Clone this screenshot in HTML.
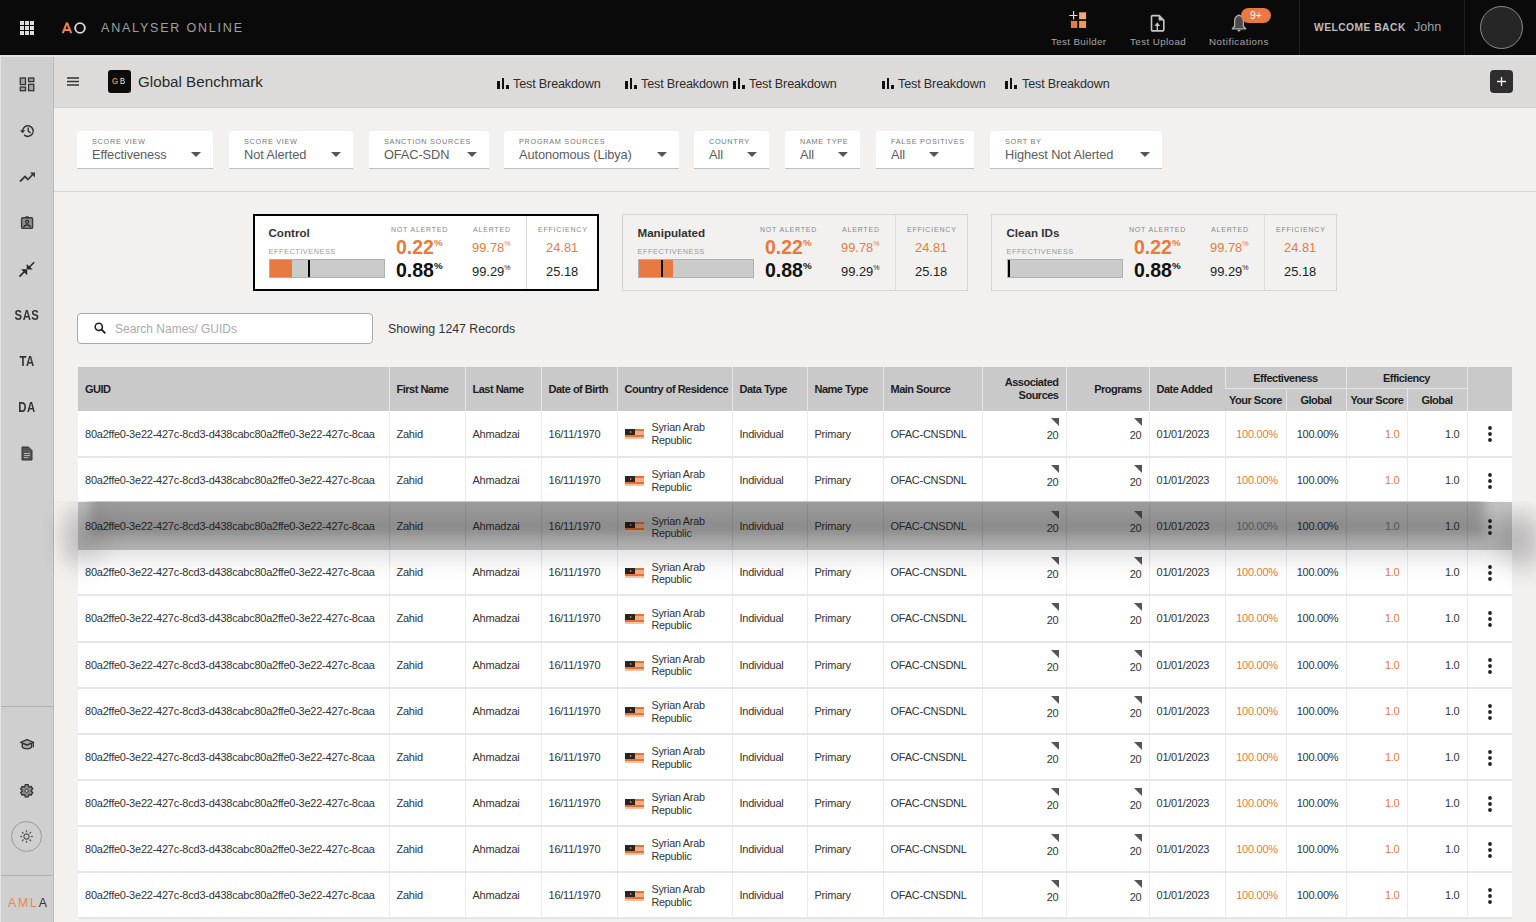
<!DOCTYPE html><html><head><meta charset="utf-8"><style>
*{margin:0;padding:0;box-sizing:border-box}
html,body{width:1536px;height:922px;overflow:hidden;background:#f2f1f0;font-family:"Liberation Sans",sans-serif;color:#333}
.a{position:absolute}
.top{left:0;top:0;width:1536px;height:55px;background:#0a0a0a}
.side{left:0;top:55px;width:54px;height:867px;background:#cfcfcf;border-right:1px solid #bbbbbb}
.hdr{left:54px;top:55px;width:1482px;height:53px;background:#dcdbda;border-bottom:1px solid #d0d0d0}
.fbar{left:54px;top:108px;width:1482px;height:84px;border-bottom:1px solid #d6d6d6}
.fbox{top:130.5px;height:37.5px;background:#fff;box-shadow:0 1px 0 rgba(0,0,0,.2);border-radius:3px 3px 0 0}
.fbox .l{position:absolute;left:15px;top:6px;font-size:7.3px;letter-spacing:.7px;color:#777;white-space:nowrap}
.fbox .v{position:absolute;left:15px;top:16.4px;font-size:12.8px;color:#5c5c5c;letter-spacing:-.1px;white-space:nowrap}
.fbox .ar{position:absolute;top:21px;width:0;height:0;border-left:5px solid transparent;border-right:5px solid transparent;border-top:5px solid #555}
.tab{top:76.5px;font-size:12.6px;color:#2b2b2b;white-space:nowrap;letter-spacing:-.15px}
.bars{top:77px;width:12px;height:12px}
.bars i{position:absolute;bottom:0;width:2.8px;background:#111}
.card{top:214px;height:77px;width:346px}
.card .t{position:absolute;left:13.5px;top:9.5px;font-size:11.6px;font-weight:bold;color:#333}
.card .e{position:absolute;left:13.5px;top:30.5px;font-size:7.4px;letter-spacing:.5px;color:#999}
.card .bar{position:absolute;left:13.5px;top:43.3px;width:116px;height:19px;background:#cbcbcb;border:1px solid #b0b0b0}
.card .fill{position:absolute;left:0;top:0;height:17px;background:#e67a40}
.card .mk{position:absolute;top:0;width:2px;height:17px;background:#000}
.card .h{position:absolute;top:10.3px;font-size:7px;letter-spacing:.8px;color:#888;white-space:nowrap}
.card .big{position:absolute;font-size:19.5px;font-weight:bold;white-space:nowrap}
.card .big sup,.card .med sup{font-size:.5em;vertical-align:top;position:relative;top:1px}
.card .med sup{font-size:.55em;top:0}
.card .med{position:absolute;font-size:12.9px;white-space:nowrap}
.card .div{position:absolute;top:0;width:1px;height:100%;background:#dcdcdc}
.srch{left:77px;top:313px;width:296px;height:31px;background:#fff;border:1px solid #a9a9a9;border-radius:4px}
table{position:absolute;left:78px;top:367px;width:1434px;border-collapse:collapse;table-layout:fixed}
th{background:#c9c9c9;font-size:11px;font-weight:bold;color:#1e1e1e;text-align:left;letter-spacing:-.5px;border-left:1.5px solid #e4e4e4;padding:0 0 0 7px;white-space:nowrap}
th:first-child{border-left:none}
td{background:#fff;height:46.11px;border-left:1px solid #ebebef;border-bottom:2px solid #e6e5ec;font-size:11px;color:#333;padding:0 0 0 7px;white-space:nowrap;letter-spacing:-.24px}
td:first-child{border-left:none}
.o{color:#e67a40}
tr.hov td{background:#c6c6c6;border-left-color:#b4b4b4;border-bottom-color:#c6c6c6}
tr.pre td{border-bottom-color:#c6c6c6}
tr.hov td.o{color:#777}
.shw{left:40px;top:501px;width:1496px;height:92px;overflow:hidden;pointer-events:none}
.shw .b1{position:absolute;left:50px;top:-20px;width:1395px;height:55px;background:rgba(0,0,0,.2);filter:blur(6px)}
.shw .b3{position:absolute;left:1462px;top:14px;width:44px;height:56px;border-radius:22px;background:rgba(0,0,0,.13);filter:blur(12px)}
.shw .b4{position:absolute;left:24px;top:2px;width:40px;height:66px;border-radius:20px;background:rgba(0,0,0,.09);filter:blur(11px)}
.shw .b2{position:absolute;left:24px;top:14px;width:1466px;height:44px;background:rgba(0,0,0,.13);filter:blur(11px)}
.r{text-align:right;padding:0 7px 0 0}
</style></head><body>
<div class="a top"></div>
<svg class="a" style="left:20px;top:21px" width="14" height="14"><rect x="0" y="0" width="4" height="4" fill="#dcdcdc"/><rect x="5" y="0" width="4" height="4" fill="#dcdcdc"/><rect x="10" y="0" width="4" height="4" fill="#dcdcdc"/><rect x="0" y="5" width="4" height="4" fill="#dcdcdc"/><rect x="5" y="5" width="4" height="4" fill="#dcdcdc"/><rect x="10" y="5" width="4" height="4" fill="#dcdcdc"/><rect x="0" y="10" width="4" height="4" fill="#dcdcdc"/><rect x="5" y="10" width="4" height="4" fill="#dcdcdc"/><rect x="10" y="10" width="4" height="4" fill="#dcdcdc"/></svg>
<svg class="a" style="left:60px;top:20px" width="28" height="16"><path d="M2.8 13.2L6.9 2.6M7 2.6L11.2 13.2M4.2 9.9h5.6" stroke="#f08040" stroke-width="2" fill="none"/><circle cx="20" cy="8" r="4.85" fill="none" stroke="#d8d8d8" stroke-width="1.9"/></svg>
<div class="a" style="left:101px;top:21px;font-size:12.5px;letter-spacing:1.8px;color:#a0a0a0;white-space:nowrap">ANALYSER ONLINE</div>
<svg class="a" style="left:1064px;top:8px" width="26" height="24"><path d="M9.6 3.1v8.4M5.3 7.5h8.1" stroke="#e2e2e2" stroke-width="1.15"/><rect x="15.1" y="4.3" width="7" height="6.9" fill="#f3a77a"/><rect x="6.9" y="12.9" width="6.4" height="7.1" fill="#e67a40"/><rect x="15.1" y="12.9" width="7" height="7.1" fill="#ee9562"/></svg>
<div class="a" style="left:1051px;top:36px;font-size:9.8px;letter-spacing:.35px;color:#a6a6a6;white-space:nowrap">Test Builder</div>
<svg class="a" style="left:1150px;top:14px" width="16" height="18"><path d="M2.6 1.6h6.6l4.6 4.7v9.5a1.1 1.1 0 0 1-1.1 1.1h-10.1a1.1 1.1 0 0 1-1.1-1.1v-13.1a1.1 1.1 0 0 1 1.1-1.1z" fill="none" stroke="#c6c6c6" stroke-width="1.6"/><path d="M8.6 1.6v5h5z" fill="#c6c6c6"/><path d="M4.5 12L7.3 8.3 10.1 12z" fill="#c6c6c6"/><path d="M7.3 11v5.5" stroke="#c6c6c6" stroke-width="1.4"/></svg>
<div class="a" style="left:1130px;top:36px;font-size:9.8px;letter-spacing:.4px;color:#a6a6a6;white-space:nowrap">Test Upload</div>
<svg class="a" style="left:1231px;top:14px" width="16" height="18"><path d="M8 1.2c2.8 1 4.4 3.3 4.4 6v5l2.3 2.6h-13.4l2.3-2.6v-5c0-2.7 1.6-5 4.4-6z" fill="#4a4a4a" stroke="#b0b0b0" stroke-width="1.3" stroke-linejoin="round"/><ellipse cx="8" cy="16.6" rx="1.6" ry="1" fill="#b0b0b0"/></svg>
<div class="a" style="left:1241px;top:8px;width:30px;height:15px;background:#e67a40;border-radius:8px;color:#fff;font-size:10.5px;text-align:center;line-height:15px">9+</div>
<div class="a" style="left:1209px;top:36px;font-size:9.8px;letter-spacing:.5px;color:#a6a6a6;white-space:nowrap">Notifications</div>
<div class="a" style="left:1299px;top:0;width:1px;height:55px;background:#1e1e1e"></div>
<div class="a" style="left:1464px;top:0;width:1px;height:55px;background:#1e1e1e"></div>
<div class="a" style="left:1314px;top:22px;font-size:10.3px;font-weight:bold;letter-spacing:.45px;color:#bdbdbd;white-space:nowrap">WELCOME BACK</div>
<div class="a" style="left:1414px;top:20px;font-size:12.6px;color:#a0a0a0;white-space:nowrap">John</div>
<div class="a" style="left:1480px;top:6px;width:43px;height:43px;border:1.2px solid #8a8a8a;border-radius:50%;background:#262626"></div>
<div class="a side"></div>
<div class="a" style="left:0;top:55px;width:1px;height:867px;background:#e4e4e4"></div>
<svg class="a" style="left:19px;top:77px" width="16" height="16"><g fill="#a4a4a4" stroke="#333" stroke-width="1.3"><rect x="1.3" y="1" width="5.2" height="6.6"/><rect x="1.3" y="10.1" width="5.2" height="3.6"/><rect x="9.6" y="1" width="5.2" height="3.6"/><rect x="9.6" y="7.3" width="5.2" height="6.4"/></g></svg>
<svg class="a" style="left:19px;top:123px" width="16" height="16"><path d="M3.6 8a5.3 5.3 0 1 1 1.6 3.9" fill="none" stroke="#333" stroke-width="1.5"/><path d="M1 7.2h5.2l-2.6 3z" fill="#333"/><path d="M9.2 4.6v3.6l2.4 1.6" fill="none" stroke="#333" stroke-width="1.4"/></svg>
<svg class="a" style="left:19px;top:170px" width="17" height="14"><path d="M1 11.5l5-5 3 3 6-6.5" fill="none" stroke="#3a3a3a" stroke-width="1.8"/><path d="M11 2.5h5v5z" fill="#3a3a3a"/></svg>
<svg class="a" style="left:12px;top:205px" width="30" height="30"><rect x="9.6" y="12.8" width="11" height="10.6" rx="1.2" fill="#8e8e8e" stroke="#3a3a3a" stroke-width="1.4"/><rect x="13.4" y="11.2" width="3.4" height="2.4" rx=".6" fill="#3a3a3a"/><circle cx="15.1" cy="16.8" r="1.5" fill="none" stroke="#222" stroke-width="1.1"/><path d="M11.6 22.4c.6-1.8 2-2.6 3.5-2.6s2.9.8 3.5 2.6" fill="none" stroke="#222" stroke-width="1.2"/></svg>
<svg class="a" style="left:12px;top:255px" width="30" height="30"><path d="M7.4 21.6L13.6 15.4M22.2 7.2L16.4 13" stroke="#2a2a2a" stroke-width="1.6"/><path d="M9.1 14.2h6.1v6z M14.7 9v5.6h6.1z" fill="#2a2a2a"/></svg>
<div class="a" style="left:0;top:307px;width:54px;text-align:center;font-size:14.2px;font-weight:bold;letter-spacing:.6px;color:#333;transform:scaleX(.8)">SAS</div>
<div class="a" style="left:0;top:353px;width:54px;text-align:center;font-size:14.2px;font-weight:bold;letter-spacing:.6px;color:#333;transform:scaleX(.8)">TA</div>
<div class="a" style="left:0;top:399px;width:54px;text-align:center;font-size:14.2px;font-weight:bold;letter-spacing:.6px;color:#333;transform:scaleX(.8)">DA</div>
<svg class="a" style="left:21px;top:446px" width="12" height="15"><path d="M1 1h6.5l3.5 3.5v9.5h-10z" fill="#555" stroke="#333" stroke-width="1"/><path d="M3 7.5h6M3 9.5h6M3 11.5h4" stroke="#ccc" stroke-width=".8"/></svg>
<div class="a" style="left:1px;top:706px;width:52px;height:1px;background:#b0b0b0"></div>
<svg class="a" style="left:14px;top:733px" width="26" height="22"><path d="M8.3 10.6v3.6c1.6 2.2 7.8 2.2 9.4 0v-3.6" fill="#a8a8a8" stroke="#333" stroke-width="1.4"/><path d="M6.6 9.3L13 6.6l6.6 2.7L13 12z" fill="#a8a8a8" stroke="#333" stroke-width="1.4" stroke-linejoin="round"/><path d="M19.4 9.4v5.2" stroke="#333" stroke-width="1.1"/></svg>
<svg class="a" style="left:17px;top:781px" width="20" height="20"><g transform="translate(9.7,9.8)"><path d="M-1.52 -6.11 L1.52 -6.11 L1.87 -4.20 L2.70 -3.72 L4.53 -4.38 L6.06 -1.74 L4.57 -0.48 L4.57 0.48 L6.06 1.74 L4.53 4.38 L2.70 3.72 L1.87 4.20 L1.52 6.11 L-1.52 6.11 L-1.87 4.20 L-2.70 3.72 L-4.53 4.38 L-6.06 1.74 L-4.57 0.48 L-4.57 -0.48 L-6.06 -1.74 L-4.53 -4.38 L-2.70 -3.72 L-1.87 -4.20Z" fill="#8a8a8a" stroke="#333" stroke-width="1.3" stroke-linejoin="round"/><circle r="1.6" fill="#d0d0d0" stroke="#333" stroke-width="1"/></g></svg>
<div class="a" style="left:11px;top:821px;width:31px;height:31px;border:1px solid #9a9a9a;border-radius:50%"></div>
<svg class="a" style="left:19px;top:829px" width="15" height="15"><g transform="translate(7.5,7.5)" stroke="#555" stroke-width="1.2"><circle r="2.6" fill="none"/><line x1="0" y1="-4.3" x2="0" y2="-6.3" transform="rotate(0)"/><line x1="0" y1="-4.3" x2="0" y2="-6.3" transform="rotate(45)"/><line x1="0" y1="-4.3" x2="0" y2="-6.3" transform="rotate(90)"/><line x1="0" y1="-4.3" x2="0" y2="-6.3" transform="rotate(135)"/><line x1="0" y1="-4.3" x2="0" y2="-6.3" transform="rotate(180)"/><line x1="0" y1="-4.3" x2="0" y2="-6.3" transform="rotate(225)"/><line x1="0" y1="-4.3" x2="0" y2="-6.3" transform="rotate(270)"/><line x1="0" y1="-4.3" x2="0" y2="-6.3" transform="rotate(315)"/></g></svg>
<div class="a" style="left:1px;top:875px;width:52px;height:1px;background:#b0b0b0"></div>
<div class="a" style="left:8px;top:896px;font-size:12.2px;letter-spacing:1.9px;color:#ee8550;white-space:nowrap">AML<span style="color:#333">A</span></div>
<div class="a hdr"></div>
<div class="a" style="left:0;top:55px;width:1536px;height:1.5px;background:#e3e3e2"></div>
<svg class="a" style="left:67px;top:77px" width="12" height="9"><path d="M0 1h12M0 4.5h12M0 8h12" stroke="#333" stroke-width="1.4"/></svg>
<div class="a" style="left:108px;top:70px;width:23px;height:23px;background:#0b0b0b;border-radius:3px"></div>
<div class="a" style="left:112.3px;top:76px;font-size:9px;font-weight:bold;color:#ee8040;transform:scaleX(.9);transform-origin:left">G</div>
<div class="a" style="left:120.3px;top:76.3px;font-size:9px;color:#f4f4f4;transform:scaleX(.85);transform-origin:left">B</div>
<div class="a" style="left:138px;top:73px;font-size:15.2px;color:#2a2a2a;white-space:nowrap">Global Benchmark</div>
<div class="a bars" style="left:497px"><i style="left:0;height:8px"></i><i style="left:4.5px;height:11px"></i><i style="left:9px;height:4.5px"></i></div>
<div class="a tab" style="left:513px">Test Breakdown</div>
<div class="a bars" style="left:625px"><i style="left:0;height:8px"></i><i style="left:4.5px;height:11px"></i><i style="left:9px;height:4.5px"></i></div>
<div class="a tab" style="left:641px">Test Breakdown</div>
<div class="a bars" style="left:733px"><i style="left:0;height:8px"></i><i style="left:4.5px;height:11px"></i><i style="left:9px;height:4.5px"></i></div>
<div class="a tab" style="left:749px">Test Breakdown</div>
<div class="a bars" style="left:882px"><i style="left:0;height:8px"></i><i style="left:4.5px;height:11px"></i><i style="left:9px;height:4.5px"></i></div>
<div class="a tab" style="left:898px">Test Breakdown</div>
<div class="a bars" style="left:1005px"><i style="left:0;height:8px"></i><i style="left:4.5px;height:11px"></i><i style="left:9px;height:4.5px"></i></div>
<div class="a tab" style="left:1022px">Test Breakdown</div>
<div class="a" style="left:1490px;top:69.5px;width:23px;height:23.3px;background:#2e2e2e;border-radius:4px"></div>
<svg class="a" style="left:1495px;top:75px" width="13" height="13"><path d="M6.5 2v9M2 6.5h9" stroke="#eee" stroke-width="1.3"/></svg>
<div class="a fbar"></div>
<div class="a fbox" style="left:77px;width:136px"><div class="l">SCORE VIEW</div><div class="v">Effectiveness</div><div class="ar" style="left:114px"></div></div>
<div class="a fbox" style="left:229px;width:124px"><div class="l">SCORE VIEW</div><div class="v">Not Alerted</div><div class="ar" style="left:102px"></div></div>
<div class="a fbox" style="left:369px;width:120px"><div class="l">SANCTION SOURCES</div><div class="v">OFAC-SDN</div><div class="ar" style="left:98px"></div></div>
<div class="a fbox" style="left:504px;width:175px"><div class="l">PROGRAM SOURCES</div><div class="v">Autonomous (Libya)</div><div class="ar" style="left:153px"></div></div>
<div class="a fbox" style="left:694px;width:75px"><div class="l">COUNTRY</div><div class="v">All</div><div class="ar" style="left:53px"></div></div>
<div class="a fbox" style="left:785px;width:75px"><div class="l">NAME TYPE</div><div class="v">All</div><div class="ar" style="left:53px"></div></div>
<div class="a fbox" style="left:876px;width:98px"><div class="l">FALSE POSITIVES</div><div class="v">All</div><div class="ar" style="left:53px"></div></div>
<div class="a fbox" style="left:990px;width:172px"><div class="l">SORT BY</div><div class="v">Highest Not Alerted</div><div class="ar" style="left:150px"></div></div>
<div class="a card" style="left:253px;border:2px solid #000;background:#fff;"><div style="position:absolute;left:0px;top:0px;width:342px;height:73px"><div class="t">Control</div><div class="e">EFFECTIVENESS</div><div class="bar"><div class="fill" style="width:22px"></div><div class="mk" style="left:38px"></div></div><div class="h" style="left:136px">NOT ALERTED</div><div class="big" style="left:141px;top:20px;color:#e67a40">0.22<sup>%</sup></div><div class="big" style="left:141px;top:43px;color:#111">0.88<sup>%</sup></div><div class="h" style="left:218px">ALERTED</div><div class="med" style="left:217px;top:24px;color:#e67a40">99.78<sup>%</sup></div><div class="med" style="left:217px;top:47.5px;color:#222">99.29<sup>%</sup></div><div class="div" style="left:271px;top:0px;height:73px"></div><div class="h" style="left:283px">EFFICIENCY</div><div class="med" style="left:291px;top:24px;color:#e67a40">24.81</div><div class="med" style="left:291px;top:47.5px;color:#222">25.18</div></div></div>
<div class="a card" style="left:622px;border:1px solid #d6d6d6;background:#f2f1f0;"><div style="position:absolute;left:1px;top:1px;width:342px;height:73px"><div class="t">Manipulated</div><div class="e">EFFECTIVENESS</div><div class="bar"><div class="fill" style="width:34.5px"></div><div class="mk" style="left:22px"></div></div><div class="h" style="left:136px">NOT ALERTED</div><div class="big" style="left:141px;top:20px;color:#e67a40">0.22<sup>%</sup></div><div class="big" style="left:141px;top:43px;color:#111">0.88<sup>%</sup></div><div class="h" style="left:218px">ALERTED</div><div class="med" style="left:217px;top:24px;color:#e67a40">99.78<sup>%</sup></div><div class="med" style="left:217px;top:47.5px;color:#222">99.29<sup>%</sup></div><div class="div" style="left:271px;top:-1px;height:75px"></div><div class="h" style="left:283px">EFFICIENCY</div><div class="med" style="left:291px;top:24px;color:#e67a40">24.81</div><div class="med" style="left:291px;top:47.5px;color:#222">25.18</div></div></div>
<div class="a card" style="left:991px;border:1px solid #d6d6d6;background:#f2f1f0;"><div style="position:absolute;left:1px;top:1px;width:342px;height:73px"><div class="t">Clean IDs</div><div class="e">EFFECTIVENESS</div><div class="bar"><div class="mk" style="left:0px"></div></div><div class="h" style="left:136px">NOT ALERTED</div><div class="big" style="left:141px;top:20px;color:#e67a40">0.22<sup>%</sup></div><div class="big" style="left:141px;top:43px;color:#111">0.88<sup>%</sup></div><div class="h" style="left:218px">ALERTED</div><div class="med" style="left:217px;top:24px;color:#e67a40">99.78<sup>%</sup></div><div class="med" style="left:217px;top:47.5px;color:#222">99.29<sup>%</sup></div><div class="div" style="left:271px;top:-1px;height:75px"></div><div class="h" style="left:283px">EFFICIENCY</div><div class="med" style="left:291px;top:24px;color:#e67a40">24.81</div><div class="med" style="left:291px;top:47.5px;color:#222">25.18</div></div></div>
<div class="a srch"></div>
<svg class="a" style="left:94px;top:322px" width="12" height="12"><circle cx="4.8" cy="4.8" r="3.6" fill="none" stroke="#222" stroke-width="1.6"/><path d="M7.5 7.5l3.8 3.8" stroke="#222" stroke-width="1.9"/></svg>
<div class="a" style="left:115px;top:322px;font-size:12px;color:#aaa;white-space:nowrap">Search Names/ GUIDs</div>
<div class="a" style="left:388px;top:322px;font-size:12.3px;color:#333;white-space:nowrap">Showing 1247 Records</div>
<table><colgroup><col style="width:311px"><col style="width:76px"><col style="width:76px"><col style="width:76px"><col style="width:115px"><col style="width:75px"><col style="width:76px"><col style="width:99px"><col style="width:84px"><col style="width:83px"><col style="width:76px"><col style="width:61px"><col style="width:60px"><col style="width:61px"><col style="width:60px"><col style="width:45px"></colgroup>
<tr style="height:21px"><th rowspan="2">GUID</th><th rowspan="2">First Name</th><th rowspan="2">Last Name</th><th rowspan="2">Date of Birth</th><th rowspan="2">Country of Residence</th><th rowspan="2">Data Type</th><th rowspan="2">Name Type</th><th rowspan="2">Main Source</th><th rowspan="2" class="r" style="line-height:13px">Associated<br>Sources</th><th rowspan="2" class="r">Programs</th><th rowspan="2">Date Added</th><th colspan="2" style="text-align:center;border-bottom:1.5px solid #e4e4e4;padding:2px 0 0 0">Effectiveness</th><th colspan="2" style="text-align:center;border-bottom:1.5px solid #e4e4e4;padding:2px 0 0 0">Efficiency</th><th rowspan="2"></th></tr>
<tr style="height:23px"><th style="padding-left:4px">Your Score</th><th style="text-align:center;padding:0">Global</th><th style="padding-left:4px">Your Score</th><th style="text-align:center;padding:0">Global</th></tr>
<tr>
<td>80a2ffe0-3e22-427c-8cd3-d438cabc80a2ffe0-3e22-427c-8caa</td><td>Zahid</td><td>Ahmadzai</td><td>16/11/1970</td>
<td style="position:relative"><svg width="19" height="10" style="position:absolute;left:7px;top:18px"><rect width="19" height="10" fill="#f4ac88"/><rect width="19" height="2" fill="#e8732f"/><rect y="6" width="19" height="2" fill="#e8732f"/><rect y="8" width="19" height="2" fill="#f6c2a8"/><rect width="10" height="6" fill="#262626"/><rect x="5" y="2" width="1.3" height="2" fill="#e8732f"/></svg><div style="position:absolute;left:34px;top:10.3px;line-height:12.6px;font-size:10.8px">Syrian Arab<br>Republic</div></td>
<td>Individual</td><td>Primary</td><td>OFAC-CNSDNL</td>
<td class="r" style="position:relative;vertical-align:top;padding-top:18px"><svg width="8" height="8" style="position:absolute;right:7px;top:7px"><path d="M0 0h8v8z" fill="#555"/></svg>20</td><td class="r" style="position:relative;vertical-align:top;padding-top:18px"><svg width="8" height="8" style="position:absolute;right:7px;top:7px"><path d="M0 0h8v8z" fill="#555"/></svg>20</td>
<td>01/01/2023</td><td class="o" style="text-align:center;padding:0 0 0 3px">100.00%</td><td style="text-align:center;padding:0 0 0 3px">100.00%</td><td class="o r">1.0</td><td class="r">1.0</td>
<td style="position:relative"><svg width="4" height="16" style="position:absolute;left:20px;top:15px"><circle cx="2" cy="2" r="1.9" fill="#222"/><circle cx="2" cy="8" r="1.9" fill="#222"/><circle cx="2" cy="14" r="1.9" fill="#222"/></svg></td>
</tr>
<tr class="pre">
<td>80a2ffe0-3e22-427c-8cd3-d438cabc80a2ffe0-3e22-427c-8caa</td><td>Zahid</td><td>Ahmadzai</td><td>16/11/1970</td>
<td style="position:relative"><svg width="19" height="10" style="position:absolute;left:7px;top:18px"><rect width="19" height="10" fill="#f4ac88"/><rect width="19" height="2" fill="#e8732f"/><rect y="6" width="19" height="2" fill="#e8732f"/><rect y="8" width="19" height="2" fill="#f6c2a8"/><rect width="10" height="6" fill="#262626"/><rect x="5" y="2" width="1.3" height="2" fill="#e8732f"/></svg><div style="position:absolute;left:34px;top:10.3px;line-height:12.6px;font-size:10.8px">Syrian Arab<br>Republic</div></td>
<td>Individual</td><td>Primary</td><td>OFAC-CNSDNL</td>
<td class="r" style="position:relative;vertical-align:top;padding-top:18px"><svg width="8" height="8" style="position:absolute;right:7px;top:7px"><path d="M0 0h8v8z" fill="#555"/></svg>20</td><td class="r" style="position:relative;vertical-align:top;padding-top:18px"><svg width="8" height="8" style="position:absolute;right:7px;top:7px"><path d="M0 0h8v8z" fill="#555"/></svg>20</td>
<td>01/01/2023</td><td class="o" style="text-align:center;padding:0 0 0 3px">100.00%</td><td style="text-align:center;padding:0 0 0 3px">100.00%</td><td class="o r">1.0</td><td class="r">1.0</td>
<td style="position:relative"><svg width="4" height="16" style="position:absolute;left:20px;top:15px"><circle cx="2" cy="2" r="1.9" fill="#222"/><circle cx="2" cy="8" r="1.9" fill="#222"/><circle cx="2" cy="14" r="1.9" fill="#222"/></svg></td>
</tr>
<tr class="hov">
<td>80a2ffe0-3e22-427c-8cd3-d438cabc80a2ffe0-3e22-427c-8caa</td><td>Zahid</td><td>Ahmadzai</td><td>16/11/1970</td>
<td style="position:relative"><svg width="19" height="10" style="position:absolute;left:7px;top:18px"><rect width="19" height="10" fill="#f4ac88"/><rect width="19" height="2" fill="#e8732f"/><rect y="6" width="19" height="2" fill="#e8732f"/><rect y="8" width="19" height="2" fill="#f6c2a8"/><rect width="10" height="6" fill="#262626"/><rect x="5" y="2" width="1.3" height="2" fill="#e8732f"/></svg><div style="position:absolute;left:34px;top:10.3px;line-height:12.6px;font-size:10.8px">Syrian Arab<br>Republic</div></td>
<td>Individual</td><td>Primary</td><td>OFAC-CNSDNL</td>
<td class="r" style="position:relative;vertical-align:top;padding-top:18px"><svg width="8" height="8" style="position:absolute;right:7px;top:7px"><path d="M0 0h8v8z" fill="#555"/></svg>20</td><td class="r" style="position:relative;vertical-align:top;padding-top:18px"><svg width="8" height="8" style="position:absolute;right:7px;top:7px"><path d="M0 0h8v8z" fill="#555"/></svg>20</td>
<td>01/01/2023</td><td class="o" style="text-align:center;padding:0 0 0 3px">100.00%</td><td style="text-align:center;padding:0 0 0 3px">100.00%</td><td class="o r">1.0</td><td class="r">1.0</td>
<td style="position:relative"><svg width="4" height="16" style="position:absolute;left:20px;top:15px"><circle cx="2" cy="2" r="1.9" fill="#222"/><circle cx="2" cy="8" r="1.9" fill="#222"/><circle cx="2" cy="14" r="1.9" fill="#222"/></svg></td>
</tr>
<tr>
<td>80a2ffe0-3e22-427c-8cd3-d438cabc80a2ffe0-3e22-427c-8caa</td><td>Zahid</td><td>Ahmadzai</td><td>16/11/1970</td>
<td style="position:relative"><svg width="19" height="10" style="position:absolute;left:7px;top:18px"><rect width="19" height="10" fill="#f4ac88"/><rect width="19" height="2" fill="#e8732f"/><rect y="6" width="19" height="2" fill="#e8732f"/><rect y="8" width="19" height="2" fill="#f6c2a8"/><rect width="10" height="6" fill="#262626"/><rect x="5" y="2" width="1.3" height="2" fill="#e8732f"/></svg><div style="position:absolute;left:34px;top:10.3px;line-height:12.6px;font-size:10.8px">Syrian Arab<br>Republic</div></td>
<td>Individual</td><td>Primary</td><td>OFAC-CNSDNL</td>
<td class="r" style="position:relative;vertical-align:top;padding-top:18px"><svg width="8" height="8" style="position:absolute;right:7px;top:7px"><path d="M0 0h8v8z" fill="#555"/></svg>20</td><td class="r" style="position:relative;vertical-align:top;padding-top:18px"><svg width="8" height="8" style="position:absolute;right:7px;top:7px"><path d="M0 0h8v8z" fill="#555"/></svg>20</td>
<td>01/01/2023</td><td class="o" style="text-align:center;padding:0 0 0 3px">100.00%</td><td style="text-align:center;padding:0 0 0 3px">100.00%</td><td class="o r">1.0</td><td class="r">1.0</td>
<td style="position:relative"><svg width="4" height="16" style="position:absolute;left:20px;top:15px"><circle cx="2" cy="2" r="1.9" fill="#222"/><circle cx="2" cy="8" r="1.9" fill="#222"/><circle cx="2" cy="14" r="1.9" fill="#222"/></svg></td>
</tr>
<tr>
<td>80a2ffe0-3e22-427c-8cd3-d438cabc80a2ffe0-3e22-427c-8caa</td><td>Zahid</td><td>Ahmadzai</td><td>16/11/1970</td>
<td style="position:relative"><svg width="19" height="10" style="position:absolute;left:7px;top:18px"><rect width="19" height="10" fill="#f4ac88"/><rect width="19" height="2" fill="#e8732f"/><rect y="6" width="19" height="2" fill="#e8732f"/><rect y="8" width="19" height="2" fill="#f6c2a8"/><rect width="10" height="6" fill="#262626"/><rect x="5" y="2" width="1.3" height="2" fill="#e8732f"/></svg><div style="position:absolute;left:34px;top:10.3px;line-height:12.6px;font-size:10.8px">Syrian Arab<br>Republic</div></td>
<td>Individual</td><td>Primary</td><td>OFAC-CNSDNL</td>
<td class="r" style="position:relative;vertical-align:top;padding-top:18px"><svg width="8" height="8" style="position:absolute;right:7px;top:7px"><path d="M0 0h8v8z" fill="#555"/></svg>20</td><td class="r" style="position:relative;vertical-align:top;padding-top:18px"><svg width="8" height="8" style="position:absolute;right:7px;top:7px"><path d="M0 0h8v8z" fill="#555"/></svg>20</td>
<td>01/01/2023</td><td class="o" style="text-align:center;padding:0 0 0 3px">100.00%</td><td style="text-align:center;padding:0 0 0 3px">100.00%</td><td class="o r">1.0</td><td class="r">1.0</td>
<td style="position:relative"><svg width="4" height="16" style="position:absolute;left:20px;top:15px"><circle cx="2" cy="2" r="1.9" fill="#222"/><circle cx="2" cy="8" r="1.9" fill="#222"/><circle cx="2" cy="14" r="1.9" fill="#222"/></svg></td>
</tr>
<tr>
<td>80a2ffe0-3e22-427c-8cd3-d438cabc80a2ffe0-3e22-427c-8caa</td><td>Zahid</td><td>Ahmadzai</td><td>16/11/1970</td>
<td style="position:relative"><svg width="19" height="10" style="position:absolute;left:7px;top:18px"><rect width="19" height="10" fill="#f4ac88"/><rect width="19" height="2" fill="#e8732f"/><rect y="6" width="19" height="2" fill="#e8732f"/><rect y="8" width="19" height="2" fill="#f6c2a8"/><rect width="10" height="6" fill="#262626"/><rect x="5" y="2" width="1.3" height="2" fill="#e8732f"/></svg><div style="position:absolute;left:34px;top:10.3px;line-height:12.6px;font-size:10.8px">Syrian Arab<br>Republic</div></td>
<td>Individual</td><td>Primary</td><td>OFAC-CNSDNL</td>
<td class="r" style="position:relative;vertical-align:top;padding-top:18px"><svg width="8" height="8" style="position:absolute;right:7px;top:7px"><path d="M0 0h8v8z" fill="#555"/></svg>20</td><td class="r" style="position:relative;vertical-align:top;padding-top:18px"><svg width="8" height="8" style="position:absolute;right:7px;top:7px"><path d="M0 0h8v8z" fill="#555"/></svg>20</td>
<td>01/01/2023</td><td class="o" style="text-align:center;padding:0 0 0 3px">100.00%</td><td style="text-align:center;padding:0 0 0 3px">100.00%</td><td class="o r">1.0</td><td class="r">1.0</td>
<td style="position:relative"><svg width="4" height="16" style="position:absolute;left:20px;top:15px"><circle cx="2" cy="2" r="1.9" fill="#222"/><circle cx="2" cy="8" r="1.9" fill="#222"/><circle cx="2" cy="14" r="1.9" fill="#222"/></svg></td>
</tr>
<tr>
<td>80a2ffe0-3e22-427c-8cd3-d438cabc80a2ffe0-3e22-427c-8caa</td><td>Zahid</td><td>Ahmadzai</td><td>16/11/1970</td>
<td style="position:relative"><svg width="19" height="10" style="position:absolute;left:7px;top:18px"><rect width="19" height="10" fill="#f4ac88"/><rect width="19" height="2" fill="#e8732f"/><rect y="6" width="19" height="2" fill="#e8732f"/><rect y="8" width="19" height="2" fill="#f6c2a8"/><rect width="10" height="6" fill="#262626"/><rect x="5" y="2" width="1.3" height="2" fill="#e8732f"/></svg><div style="position:absolute;left:34px;top:10.3px;line-height:12.6px;font-size:10.8px">Syrian Arab<br>Republic</div></td>
<td>Individual</td><td>Primary</td><td>OFAC-CNSDNL</td>
<td class="r" style="position:relative;vertical-align:top;padding-top:18px"><svg width="8" height="8" style="position:absolute;right:7px;top:7px"><path d="M0 0h8v8z" fill="#555"/></svg>20</td><td class="r" style="position:relative;vertical-align:top;padding-top:18px"><svg width="8" height="8" style="position:absolute;right:7px;top:7px"><path d="M0 0h8v8z" fill="#555"/></svg>20</td>
<td>01/01/2023</td><td class="o" style="text-align:center;padding:0 0 0 3px">100.00%</td><td style="text-align:center;padding:0 0 0 3px">100.00%</td><td class="o r">1.0</td><td class="r">1.0</td>
<td style="position:relative"><svg width="4" height="16" style="position:absolute;left:20px;top:15px"><circle cx="2" cy="2" r="1.9" fill="#222"/><circle cx="2" cy="8" r="1.9" fill="#222"/><circle cx="2" cy="14" r="1.9" fill="#222"/></svg></td>
</tr>
<tr>
<td>80a2ffe0-3e22-427c-8cd3-d438cabc80a2ffe0-3e22-427c-8caa</td><td>Zahid</td><td>Ahmadzai</td><td>16/11/1970</td>
<td style="position:relative"><svg width="19" height="10" style="position:absolute;left:7px;top:18px"><rect width="19" height="10" fill="#f4ac88"/><rect width="19" height="2" fill="#e8732f"/><rect y="6" width="19" height="2" fill="#e8732f"/><rect y="8" width="19" height="2" fill="#f6c2a8"/><rect width="10" height="6" fill="#262626"/><rect x="5" y="2" width="1.3" height="2" fill="#e8732f"/></svg><div style="position:absolute;left:34px;top:10.3px;line-height:12.6px;font-size:10.8px">Syrian Arab<br>Republic</div></td>
<td>Individual</td><td>Primary</td><td>OFAC-CNSDNL</td>
<td class="r" style="position:relative;vertical-align:top;padding-top:18px"><svg width="8" height="8" style="position:absolute;right:7px;top:7px"><path d="M0 0h8v8z" fill="#555"/></svg>20</td><td class="r" style="position:relative;vertical-align:top;padding-top:18px"><svg width="8" height="8" style="position:absolute;right:7px;top:7px"><path d="M0 0h8v8z" fill="#555"/></svg>20</td>
<td>01/01/2023</td><td class="o" style="text-align:center;padding:0 0 0 3px">100.00%</td><td style="text-align:center;padding:0 0 0 3px">100.00%</td><td class="o r">1.0</td><td class="r">1.0</td>
<td style="position:relative"><svg width="4" height="16" style="position:absolute;left:20px;top:15px"><circle cx="2" cy="2" r="1.9" fill="#222"/><circle cx="2" cy="8" r="1.9" fill="#222"/><circle cx="2" cy="14" r="1.9" fill="#222"/></svg></td>
</tr>
<tr>
<td>80a2ffe0-3e22-427c-8cd3-d438cabc80a2ffe0-3e22-427c-8caa</td><td>Zahid</td><td>Ahmadzai</td><td>16/11/1970</td>
<td style="position:relative"><svg width="19" height="10" style="position:absolute;left:7px;top:18px"><rect width="19" height="10" fill="#f4ac88"/><rect width="19" height="2" fill="#e8732f"/><rect y="6" width="19" height="2" fill="#e8732f"/><rect y="8" width="19" height="2" fill="#f6c2a8"/><rect width="10" height="6" fill="#262626"/><rect x="5" y="2" width="1.3" height="2" fill="#e8732f"/></svg><div style="position:absolute;left:34px;top:10.3px;line-height:12.6px;font-size:10.8px">Syrian Arab<br>Republic</div></td>
<td>Individual</td><td>Primary</td><td>OFAC-CNSDNL</td>
<td class="r" style="position:relative;vertical-align:top;padding-top:18px"><svg width="8" height="8" style="position:absolute;right:7px;top:7px"><path d="M0 0h8v8z" fill="#555"/></svg>20</td><td class="r" style="position:relative;vertical-align:top;padding-top:18px"><svg width="8" height="8" style="position:absolute;right:7px;top:7px"><path d="M0 0h8v8z" fill="#555"/></svg>20</td>
<td>01/01/2023</td><td class="o" style="text-align:center;padding:0 0 0 3px">100.00%</td><td style="text-align:center;padding:0 0 0 3px">100.00%</td><td class="o r">1.0</td><td class="r">1.0</td>
<td style="position:relative"><svg width="4" height="16" style="position:absolute;left:20px;top:15px"><circle cx="2" cy="2" r="1.9" fill="#222"/><circle cx="2" cy="8" r="1.9" fill="#222"/><circle cx="2" cy="14" r="1.9" fill="#222"/></svg></td>
</tr>
<tr>
<td>80a2ffe0-3e22-427c-8cd3-d438cabc80a2ffe0-3e22-427c-8caa</td><td>Zahid</td><td>Ahmadzai</td><td>16/11/1970</td>
<td style="position:relative"><svg width="19" height="10" style="position:absolute;left:7px;top:18px"><rect width="19" height="10" fill="#f4ac88"/><rect width="19" height="2" fill="#e8732f"/><rect y="6" width="19" height="2" fill="#e8732f"/><rect y="8" width="19" height="2" fill="#f6c2a8"/><rect width="10" height="6" fill="#262626"/><rect x="5" y="2" width="1.3" height="2" fill="#e8732f"/></svg><div style="position:absolute;left:34px;top:10.3px;line-height:12.6px;font-size:10.8px">Syrian Arab<br>Republic</div></td>
<td>Individual</td><td>Primary</td><td>OFAC-CNSDNL</td>
<td class="r" style="position:relative;vertical-align:top;padding-top:18px"><svg width="8" height="8" style="position:absolute;right:7px;top:7px"><path d="M0 0h8v8z" fill="#555"/></svg>20</td><td class="r" style="position:relative;vertical-align:top;padding-top:18px"><svg width="8" height="8" style="position:absolute;right:7px;top:7px"><path d="M0 0h8v8z" fill="#555"/></svg>20</td>
<td>01/01/2023</td><td class="o" style="text-align:center;padding:0 0 0 3px">100.00%</td><td style="text-align:center;padding:0 0 0 3px">100.00%</td><td class="o r">1.0</td><td class="r">1.0</td>
<td style="position:relative"><svg width="4" height="16" style="position:absolute;left:20px;top:15px"><circle cx="2" cy="2" r="1.9" fill="#222"/><circle cx="2" cy="8" r="1.9" fill="#222"/><circle cx="2" cy="14" r="1.9" fill="#222"/></svg></td>
</tr>
<tr>
<td>80a2ffe0-3e22-427c-8cd3-d438cabc80a2ffe0-3e22-427c-8caa</td><td>Zahid</td><td>Ahmadzai</td><td>16/11/1970</td>
<td style="position:relative"><svg width="19" height="10" style="position:absolute;left:7px;top:18px"><rect width="19" height="10" fill="#f4ac88"/><rect width="19" height="2" fill="#e8732f"/><rect y="6" width="19" height="2" fill="#e8732f"/><rect y="8" width="19" height="2" fill="#f6c2a8"/><rect width="10" height="6" fill="#262626"/><rect x="5" y="2" width="1.3" height="2" fill="#e8732f"/></svg><div style="position:absolute;left:34px;top:10.3px;line-height:12.6px;font-size:10.8px">Syrian Arab<br>Republic</div></td>
<td>Individual</td><td>Primary</td><td>OFAC-CNSDNL</td>
<td class="r" style="position:relative;vertical-align:top;padding-top:18px"><svg width="8" height="8" style="position:absolute;right:7px;top:7px"><path d="M0 0h8v8z" fill="#555"/></svg>20</td><td class="r" style="position:relative;vertical-align:top;padding-top:18px"><svg width="8" height="8" style="position:absolute;right:7px;top:7px"><path d="M0 0h8v8z" fill="#555"/></svg>20</td>
<td>01/01/2023</td><td class="o" style="text-align:center;padding:0 0 0 3px">100.00%</td><td style="text-align:center;padding:0 0 0 3px">100.00%</td><td class="o r">1.0</td><td class="r">1.0</td>
<td style="position:relative"><svg width="4" height="16" style="position:absolute;left:20px;top:15px"><circle cx="2" cy="2" r="1.9" fill="#222"/><circle cx="2" cy="8" r="1.9" fill="#222"/><circle cx="2" cy="14" r="1.9" fill="#222"/></svg></td>
</tr>
</table>
<div class="a shw"><div class="b1"></div><div class="b2"></div><div class="b3"></div><div class="b4"></div></div>
</body></html>
